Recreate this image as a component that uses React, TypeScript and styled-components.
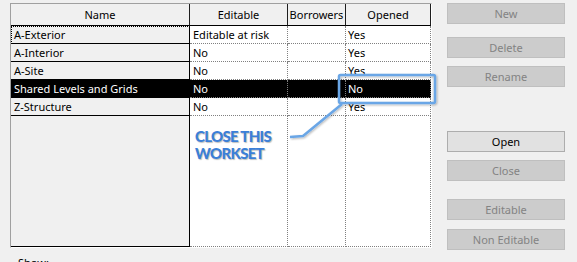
import styled, { createGlobalStyle } from 'styled-components';

const GlobalStyle = createGlobalStyle`
  html, body {
    margin: 0;
    padding: 0;
    background: #f0f0f0;
  }
  body {
    font-family: 'Noto Sans', 'Liberation Sans', sans-serif;
    font-size: 11px;
    color: #000;
  }
`;

const Page = styled.div`
  position: relative;
  box-sizing: border-box;
  display: flex;
  align-items: flex-start;
  width: 577px;
  height: 262px;
  overflow: hidden;
  padding: 3px 0 0 10px;
  background: #f0f0f0;
`;

const LeftPane = styled.div`
  display: flex;
  flex-direction: column;
`;

const Grid = styled.div`
  box-sizing: border-box;
  display: grid;
  grid-template-columns: 179px 98px 58px 85px;
  grid-template-rows: 22px repeat(5, 18px) 1fr;
  width: 422px;
  height: 245px;
  border-top: 1px solid #a0a0a0;
  border-left: 1px solid #a0a0a0;
  border-right: 1px solid #ffffff;
  border-bottom: 1px solid #ffffff;
  background: #ffffff;
`;

const HeaderCell = styled.div`
  box-sizing: border-box;
  display: flex;
  align-items: center;
  justify-content: center;
  background: #f0f0f0;
  border-right: 1px solid #1e1e1e;
  border-bottom: 1px solid #000;
  white-space: nowrap;
`;

const NameCell = styled.div<{ $selected?: boolean; $focus?: boolean }>`
  box-sizing: border-box;
  display: flex;
  align-items: center;
  padding-left: 3px;
  white-space: nowrap;
  background: ${(p) => (p.$selected ? '#000' : '#f0f0f0')};
  color: ${(p) => (p.$selected ? '#fff' : '#000')};
  border-right: 1px solid #000;
  border-bottom: 1px solid #000;
  outline: ${(p) => (p.$focus ? '1px dotted #000' : 'none')};
  outline-offset: -1px;
`;

const DataCell = styled.div<{ $selected?: boolean; $pad?: number }>`
  box-sizing: border-box;
  display: flex;
  align-items: center;
  padding-left: ${(p) => p.$pad ?? 3}px;
  white-space: nowrap;
  background: ${(p) => (p.$selected ? '#000' : '#fff')};
  color: ${(p) => (p.$selected ? '#fff' : '#000')};
  border-right: 1px dotted #808080;
  border-bottom: 1px dotted #808080;
`;

const Footer = styled.div`
  margin-top: 8px;
  padding-left: 8px;
  line-height: 14px;
`;

const ButtonColumn = styled.div`
  display: flex;
  flex-direction: column;
  width: 118px;
  margin-left: 15px;
`;

const Button = styled.button<{ $mt?: number; $enabled?: boolean }>`
  box-sizing: border-box;
  height: 21px;
  margin: ${(p) => p.$mt ?? 0}px 0 0 0;
  padding: 0;
  font-family: inherit;
  font-size: 11px;
  background: ${(p) => (p.$enabled ? '#e1e1e1' : '#cccccc')};
  border: 1px solid ${(p) => (p.$enabled ? '#adadad' : '#bfbfbf')};
  color: ${(p) => (p.$enabled ? '#000' : '#838383')};
`;

const Callout = styled.svg`
  position: absolute;
  left: 0;
  top: 0;
  pointer-events: none;
`;

const CalloutLabel = styled.div`
  position: absolute;
  left: 195px;
  top: 128px;
  font-family: Lato, 'Noto Sans', sans-serif;
  font-weight: 900;
  font-size: 15px;
  line-height: 17px;
  letter-spacing: -0.7px;
  color: #3b7fd8;
  text-shadow: 1px 1px 1px rgba(0, 0, 0, 0.25);
`;

type Workset = {
  name: string;
  editable: string;
  borrowers: string;
  opened: string;
};

const worksets: Workset[] = [
  { name: 'A-Exterior', editable: 'Editable at risk', borrowers: '', opened: 'Yes' },
  { name: 'A-Interior', editable: 'No', borrowers: '', opened: 'Yes' },
  { name: 'A-Site', editable: 'No', borrowers: '', opened: 'Yes' },
  { name: 'Shared Levels and Grids', editable: 'No', borrowers: '', opened: 'No' },
  { name: 'Z-Structure', editable: 'No', borrowers: '', opened: 'Yes' },
];

const selectedIndex = 3;

export default function App() {
  return (
    <>
      <GlobalStyle />
      <Page>
        <LeftPane>
          <Grid>
            <HeaderCell>Name</HeaderCell>
            <HeaderCell>Editable</HeaderCell>
            <HeaderCell>Borrowers</HeaderCell>
            <HeaderCell>Opened</HeaderCell>
            {worksets.map((w, i) => {
              const sel = i === selectedIndex;
              return [
                <NameCell key={`n${i}`} $selected={sel} $focus={i === 0}>
                  {w.name}
                </NameCell>,
                <DataCell key={`e${i}`} $selected={sel}>
                  {w.editable}
                </DataCell>,
                <DataCell key={`b${i}`} $selected={sel}>
                  {w.borrowers}
                </DataCell>,
                <DataCell key={`o${i}`} $selected={sel} $pad={2}>
                  {w.opened}
                </DataCell>,
              ];
            })}
            <NameCell />
            <DataCell />
            <DataCell />
            <DataCell />
          </Grid>
          <Footer>Show:</Footer>
        </LeftPane>
        <ButtonColumn>
          <Button>New</Button>
          <Button $mt={13}>Delete</Button>
          <Button $mt={8}>Rename</Button>
          <Button $mt={44} $enabled>
            Open
          </Button>
          <Button $mt={8}>Close</Button>
          <Button $mt={18}>Editable</Button>
          <Button $mt={9}>Non Editable</Button>
        </ButtonColumn>

        <Callout width="577" height="262" viewBox="0 0 577 262">
          <defs>
            <filter id="glow" x="-10%" y="-10%" width="120%" height="120%">
              <feGaussianBlur in="SourceAlpha" stdDeviation="0.8" />
              <feOffset dx="0.5" dy="0.5" />
              <feComponentTransfer>
                <feFuncA type="linear" slope="0.3" />
              </feComponentTransfer>
              <feMerge>
                <feMergeNode />
                <feMergeNode in="SourceGraphic" />
              </feMerge>
            </filter>
          </defs>
          <g filter="url(#glow)" stroke="#6aa6e6" strokeWidth="2.5" fill="none">
            <rect x="339" y="75" width="96" height="28" rx="1.5" />
            <polyline points="342,104 303,136 290,137" strokeLinejoin="round" />
          </g>
        </Callout>
        <CalloutLabel>
          CLOSE THIS
          <br />
          WORKSET
        </CalloutLabel>
      </Page>
    </>
  );
}
